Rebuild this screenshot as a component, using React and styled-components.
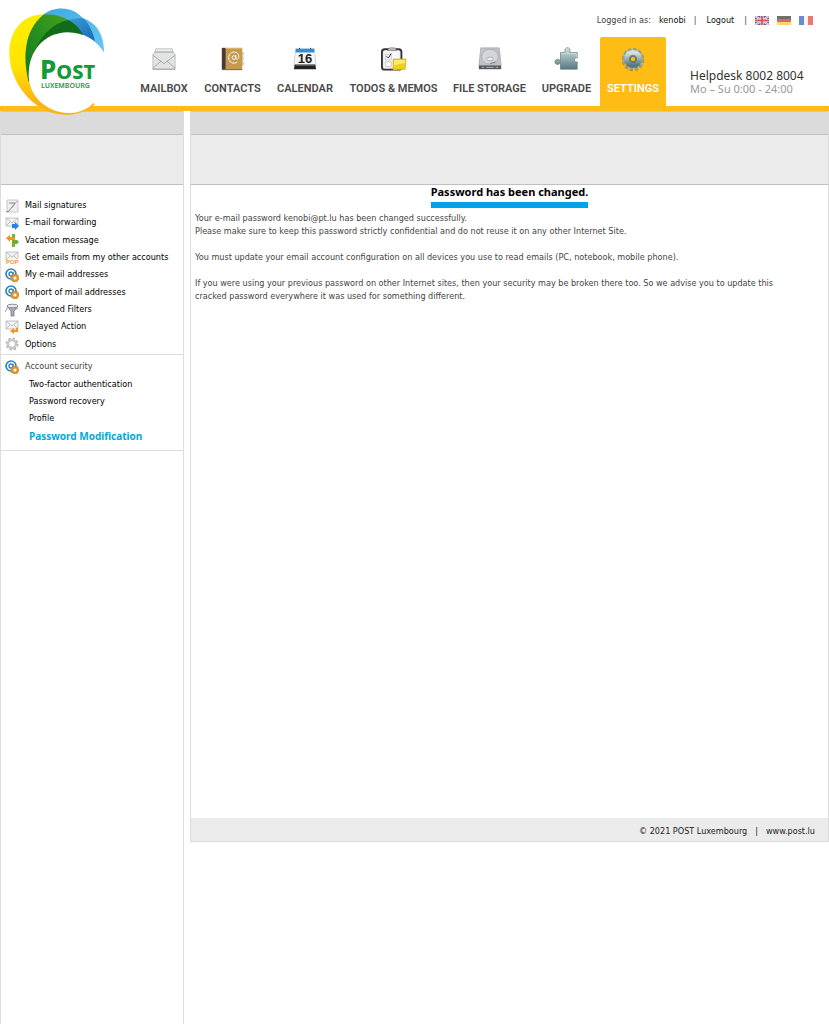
import React from "react";
import styled, { createGlobalStyle } from "styled-components";

const ui = `"DejaVu Sans Condensed", "Noto Sans", sans-serif`;
const brand = `"Noto Sans", "Open Sans", sans-serif`;

const GlobalStyle = createGlobalStyle`
  *, *::before, *::after { box-sizing: border-box; }
  body { margin: 0; background: #fff; color: #444; font: 9px/13px ${ui}; }
  a { color: inherit; text-decoration: none; }
  ul { list-style: none; margin: 0; padding: 0; }
  svg { display: block; flex: none; }
`;

const Page = styled.div`
  min-height: 100vh;
  display: flex;
  flex-direction: column;
`;

const Header = styled.header`
  position: relative;
  border-bottom: 5px solid #ffbc14;
  padding-left: 132px;
`;

const LogoLink = styled.a`
  position: absolute;
  left: 0;
  top: 0;
  z-index: 1;
`;

const AccountBar = styled.div`
  height: 37px;
  padding: 3px 16px 0 0;
  display: flex;
  align-items: center;
  justify-content: flex-end;
  white-space: nowrap;
`;

const AccountName = styled.a`
  color: #111;
  margin: 0 8px;
`;

const LogoutLink = styled.a`
  color: #111;
  margin: 0 10px;
`;

const Flags = styled.div`
  display: flex;
  gap: 8px;
  margin-left: 8px;
`;

const FlagButton = styled.button`
  border: 0;
  padding: 0;
  background: none;
  cursor: pointer;
`;

const HeaderRow = styled.div`
  display: flex;
  height: 69px;
`;

const Nav = styled.nav`
  display: flex;
`;

const NavItem = styled.a`
  width: ${(p) => p.$width}px;
  display: flex;
  flex-direction: column;
  align-items: center;
  gap: 9px;
  padding-top: 9px;
  border-radius: 2px 2px 0 0;
  white-space: nowrap;
  font: 600 11px/16px Roboto, sans-serif;
  color: ${(p) => (p.$active ? "#fff" : "#484848")};
  background: ${(p) => (p.$active ? "#ffbc14" : "transparent")};
`;

const Helpdesk = styled.div`
  margin-left: 24px;
  padding-top: 32px;
  font: 11px/13px ${brand};
  white-space: nowrap;
  color: #999;
`;

const Phone = styled.div`
  font-size: 12px;
  color: #333;
`;

const Body = styled.div`
  flex: 1;
  display: flex;
  gap: 6px;
`;

const Sidebar = styled.aside`
  width: 184px;
  flex: none;
  border: solid #dcdcdc;
  border-width: 0 1px;
`;

const TitleStrip = styled.div`
  height: 24px;
  background: #dbdbdb;
  border-top: 1px solid #c8c8c8;
  border-bottom: 1px solid #c0c0c0;
`;

const ToolStrip = styled.div`
  height: 50px;
  background: #ebebeb;
  border-bottom: 1px solid #c0c0c0;
`;

const MenuBlock = styled.div`
  padding: ${(p) => (p.$first ? 12 : 3)}px 0 ${(p) => (p.$first ? 1 : 5)}px 4px;
  border-bottom: 1px solid #dcdcdc;
`;

const MenuList = styled.ul`
  height: ${(p) => p.$height}px;
  display: grid;
  grid-auto-rows: 1fr;
`;

const MenuLink = styled.a`
  height: 100%;
  display: flex;
  align-items: center;
  gap: 6px;
  white-space: nowrap;
  color: ${(p) => (p.$muted ? "#444" : "#000")};
`;

const SubLink = styled(MenuLink)`
  padding-left: 24px;
  ${(p) => p.$active && `font: 700 10px/13px ${brand}; color: #00a9e0;`}
`;

const Main = styled.main`
  flex: 1;
  min-width: 0;
  align-self: flex-start;
  border: solid #dcdcdc;
  border-width: 0 1px 1px;
`;

const Content = styled.section`
  min-height: 633px;
  padding: 0 4px;
`;

const Heading = styled.h1`
  width: fit-content;
  margin: 0 auto 4px;
  padding-bottom: 3px;
  border-bottom: 6px solid #00a2e8;
  font: 700 11px/14px ${brand};
  color: #000;
`;

const Paragraph = styled.p`
  margin: 0 24px 13px 0;
`;

const Footer = styled.footer`
  height: 23px;
  padding: 3px 13px 0 0;
  background: #ebebeb;
  color: #222;
  display: flex;
  align-items: center;
  justify-content: flex-end;
  gap: 8px;
`;

function Logo() {
  return (
    <svg width="130" height="120" viewBox="0 0 130 120" role="img" aria-label="POST Luxembourg">
      <defs>
        <linearGradient id="lgY" x1="0" y1="0" x2="0" y2="1">
          <stop offset="0" stopColor="#ffee00" /><stop offset=".5" stopColor="#ffe600" /><stop offset=".85" stopColor="#fdb515" />
        </linearGradient>
        <linearGradient id="lgG" x1="0" y1="1" x2="1" y2="0">
          <stop offset="0" stopColor="#0f7a22" /><stop offset="1" stopColor="#45a41c" />
        </linearGradient>
        <linearGradient id="lgB" x1="0" y1="0" x2="1" y2="1">
          <stop offset="0" stopColor="#3fa9e0" /><stop offset="1" stopColor="#66c9f4" />
        </linearGradient>
        <linearGradient id="lgD" x1="0" y1="0" x2="1" y2="1">
          <stop offset="0" stopColor="#3a9cd8" /><stop offset="1" stopColor="#1b68b3" />
        </linearGradient>
      </defs>
      <g transform="scale(.33333)">
        <path d="M132 43C70 42 28 92 28 157C28 230 72 300 138 332C190 353 245 347 284 314L200 200Z" fill="url(#lgY)" />
        <path d="M130 44C155 24 195 18 230 38L252 56C290 68 314 108 312 158C296 130 262 104 225 98L160 100Z" fill="url(#lgB)" />
        <path d="M206 60C222 55 238 54 252 56C268 74 280 98 285 124C268 110 248 102 225 98Z" fill="url(#lgD)" />
        <path d="M130 44C158 41 184 47 206 60L220 100L86 246C67 170 73 90 130 44Z" fill="url(#lgG)" />
        <path d="M89 222C92 145 140 72 206 60C224 70 238 84 249 103L200 130Z" fill="#126b19" />
        <path d="M86 230C84 150 135 98 203 97C250 97 290 122 313 160C318 235 296 300 268 320C245 335 225 339 205 339C150 337 91 300 86 230Z" fill="#fff" />
      </g>
      <text x="40" y="79" fontFamily="Noto Sans" fontWeight="800" fontSize="26" fill="#159a3b">P<tspan fontSize="20">OST</tspan></text>
      <text x="41" y="88" fontFamily="Noto Sans" fontWeight="600" fontSize="7" fill="#159a3b">LUXEMBOURG</text>
    </svg>
  );
}

const NAV_ART = {
  mail: (
    <g stroke="#a5a8a8" strokeWidth=".7">
      <path d="M5 3h18v13H5z" fill="#eee" /><path d="M4 6h20v12H4z" fill="#fafafa" />
      <path d="M2 9l2-2h20l2 2v16H2z" fill="#e2e4e4" />
      <path d="M2 10l12 9 12-9M2 24l9-8M26 24l-9-8" fill="none" stroke="#888c8c" />
      <path d="M2 25h24" stroke="#888" />
    </g>
  ),
  contacts: (
    <g>
      <path d="M23 6l3 2-2 3 2 2-2 3 2 3-3 3z" fill="#ddd" stroke="#aaa" strokeWidth=".5" />
      <path d="M2 2h22v23H2z" fill="#c69a4c" /><path d="M2 2h4v23H2z" fill="#49383a" />
      <path d="M6 2h18v1H6z" fill="#dfb974" /><path d="M2 25h22v1H2z" fill="#6a5030" />
      <g fill="none" stroke="#fff" strokeWidth="1"><circle cx="15" cy="12.500" r="2" /><path d="M17 10v3.500q1.500 2 3-.5c1-4-2-6.500-5-6.500a6 6 0 1 0 3.500 11" /></g>
    </g>
  ),
  calendar: (
    <g>
      <path d="M4 3h20l2 18H2z" fill="#f7f7f7" stroke="#aaa" strokeWidth=".5" />
      <path d="M4 3h20v4H4z" fill="#2f8fd8" /><path d="M8 1v3M20 1v3" stroke="#fff" /><path d="M8 2v2M20 2v2" stroke="#333" />
      <path d="M3 20h22l1 5H2z" fill="#222" /><path d="M4 20h20v1H4z" fill="#888" />
      <text x="14" y="18" textAnchor="middle" fontFamily="Liberation Sans" fontWeight="700" fontSize="14" fill="#222">16</text>
    </g>
  ),
  todos: (
    <g>
      <rect x="1" y="3.500" width="21" height="22" rx="3" fill="#eee" stroke="#333" strokeWidth="2" />
      <path d="M4 5h15v18H4z" fill="#fafafa" /><path d="M7 5l2-3h6l2 3z" fill="#bbb" stroke="#777" strokeWidth=".6" />
      <path d="M5 9h6v6H5zM5 17h6v5H5z" fill="#fff" stroke="#aaa" strokeWidth=".7" /><path d="M6 11l2 2 3-5" fill="none" stroke="#222" />
      <path d="M13 14h14l-1 11-13 1z" fill="#ecd21c" stroke="#b89d10" strokeWidth=".6" /><path d="M14 15h12v3l-12 3z" fill="#f8ec68" />
    </g>
  ),
  storage: (
    <g>
      <path d="M4 2h20l2 19H2z" fill="#bfc2c6" stroke="#999" strokeWidth=".6" />
      <ellipse cx="14" cy="11.500" rx="9" ry="8" fill="#d3d5d8" stroke="#a0a4a8" strokeWidth=".7" />
      <ellipse cx="14" cy="14" rx="3.500" ry="2" fill="#eee" stroke="#909499" strokeWidth=".7" />
      <path d="M20 17l-6 2" stroke="#777" /><path d="M2 21h24v4H2z" fill="#54585e" /><path d="M5 23h3M10 23h8M20 23h3" stroke="#b7bac0" />
    </g>
  ),
  upgrade: (
    <g>
      <path d="M7 7h5c-2-7 7-7 5 0h8v6c-4-2-4 6 0 4v8H7v-7c-2 3-6 2-6-1s4-4 6-1z" fill="url(#steel)" stroke="#5b767a" strokeWidth=".7" />
      <path d="M8 8h16v4" fill="none" stroke="#dbe6e7" strokeWidth=".8" />
    </g>
  ),
  settings: (
    <g>
      <circle cx="14" cy="15" r="10.500" fill="none" stroke="#8b742c" strokeWidth="3" strokeDasharray="3.300 2.200" opacity=".7" />
      <circle cx="14" cy="14" r="10.500" fill="none" stroke="#8aa3aa" strokeWidth="3" strokeDasharray="3.300 2.200" />
      <circle cx="14" cy="14" r="6.500" fill="none" stroke="url(#steel)" strokeWidth="6.500" />
      <circle cx="14" cy="14" r="4" fill="none" stroke="#607b86" strokeWidth="1" />
      <circle cx="14" cy="14" r="3" fill="#ffbc14" stroke="#4b6470" />
    </g>
  ),
};

function NavIcon({ name }) {
  return (
    <svg width="26" height="26" viewBox="0 0 28 28" aria-hidden="true">
      <defs>
        <linearGradient id="steel" x1="0" y1="0" x2="0" y2="1">
          <stop offset="0" stopColor="#d4e2e4" /><stop offset="1" stopColor="#567980" />
        </linearGradient>
      </defs>
      {NAV_ART[name]}
    </svg>
  );
}

const Envelope = ({ y = 2 }) => (
  <g stroke="#b0b2b6" strokeWidth=".8" fill="#f3f3f4">
    <path d={`M1 ${y}h12v8H1z`} /><path d={`M1 ${y}l6 5 6-5M1 ${y + 8}l4-4M13 ${y + 8}l-4-4`} fill="none" />
  </g>
);

const MENU_ART = {
  signature: (
    <g><path d="M2 1h11v12H2z" fill="#f0f0f0" stroke="#bbb" strokeWidth=".8" /><path d="M4 4h6l-6 8M4 12l-3 1" fill="none" stroke="#888" /><path d="M12 2l-5 7" stroke="#aaa" /></g>
  ),
  forward: (
    <g><Envelope /><path d="M7 8h3V6l4 4-4 4v-2H7z" fill="#2583e4" /></g>
  ),
  vacation: (
    <g><path d="M7 1h3v13H7z" fill="#79b62d" /><path d="M1 5l4-3v2h5v3H5v2z" fill="#f29420" /><path d="M8 7h4l2 2-2 2H8z" fill="#72ae29" /></g>
  ),
  pop: (
    <g><Envelope y={1} /><path d="M2 8h12v6H2z" fill="#fff" /><text x="1" y="13" fontFamily="Liberation Sans" fontWeight="700" fontSize="6" fill="#f29a3c">POP</text></g>
  ),
  address: (
    <g fill="none">
      <circle cx="6" cy="6" r="5" stroke="#2180ca" strokeWidth="1.600" /><circle cx="6" cy="6" r="2" stroke="#2180ca" strokeWidth="1.300" />
      <path d="M8 4v3q2 2 3-1" stroke="#2180ca" strokeWidth="1.200" />
      <circle cx="10" cy="10" r="2.800" fill="#fff" stroke="#df952f" strokeWidth="2.400" /><circle cx="10" cy="10" r="4" stroke="#c07b24" strokeWidth="1" strokeDasharray="1.500 1.500" />
    </g>
  ),
  filter: (
    <g><path d="M2 3h11L9 8v5H6V8z" fill="#a9a9b8" stroke="#77778a" strokeWidth=".8" /><ellipse cx="7.500" cy="3" rx="5.500" ry="1.800" fill="#e7e7ee" stroke="#77778a" strokeWidth=".8" /><path d="M3 4L0 9M10 7l3-2" stroke="#999" /></g>
  ),
  delayed: (
    <g><Envelope y={1} /><path d="M13 8v4H9v2L5 11l4-3v2h2V8z" fill="#f29420" /></g>
  ),
  options: (
    <g fill="none"><circle cx="7" cy="7" r="5.500" stroke="#b5b5b5" strokeWidth="2" strokeDasharray="2.300 2" /><circle cx="7" cy="7" r="4" stroke="#c7c7c7" strokeWidth="2.400" /></g>
  ),
};

const MenuIcon = ({ name }) => (
  <svg width="14" height="14" viewBox="0 0 14 14" aria-hidden="true">{MENU_ART[name]}</svg>
);

const FLAG_ART = {
  English: (
    <g><path d="M0 0h14v9H0z" fill="#2c479c" /><path d="M0 0l14 9M14 0L0 9" stroke="#fff" strokeWidth="2" /><path d="M0 0l14 9M14 0L0 9" stroke="#d44" strokeWidth=".7" /><path d="M7 0v9M0 4.500h14" stroke="#fff" strokeWidth="3" /><path d="M7 0v9M0 4.500h14" stroke="#d8323e" strokeWidth="1.800" /></g>
  ),
  Deutsch: (
    <g><path d="M0 0h14v3H0z" fill="#555" /><path d="M0 3h14v3H0z" fill="#e04b43" /><path d="M0 6h14v3H0z" fill="#f5cf5a" /></g>
  ),
  Français: (
    <g><path d="M0 0h5v9H0z" fill="#5277c9" /><path d="M5 0h4v9H5z" fill="#f5f5f7" /><path d="M9 0h5v9H9z" fill="#ec5f57" /></g>
  ),
};

const NAV = [
  ["MAILBOX", "mail", 64],
  ["CONTACTS", "contacts", 73],
  ["CALENDAR", "calendar", 72],
  ["TODOS & MEMOS", "todos", 105],
  ["FILE STORAGE", "storage", 87],
  ["UPGRADE", "upgrade", 67],
  ["SETTINGS", "settings", 66],
];

const MENU = [
  ["Mail signatures", "signature"],
  ["E-mail forwarding", "forward"],
  ["Vacation message", "vacation"],
  ["Get emails from my other accounts", "pop"],
  ["My e-mail addresses", "address"],
  ["Import of mail addresses", "address"],
  ["Advanced Filters", "filter"],
  ["Delayed Action", "delayed"],
  ["Options", "options"],
];

const SECURITY = ["Two-factor authentication", "Password recovery", "Profile", "Password Modification"];

export default function App() {
  return (
    <Page>
      <GlobalStyle />
      <Header>
        <LogoLink href="#"><Logo /></LogoLink>
        <AccountBar>
          <span>Logged in as:</span>
          <AccountName href="#">kenobi</AccountName>
          <span>|</span>
          <LogoutLink href="#">Logout</LogoutLink>
          <span>|</span>
          <Flags>
            {Object.keys(FLAG_ART).map((lang) => (
              <FlagButton key={lang} type="button" aria-label={lang}>
                <svg width="14" height="9" viewBox="0 0 14 9">{FLAG_ART[lang]}<path d="M0 0h14v9H0z" fill="#fff" opacity=".15" /></svg>
              </FlagButton>
            ))}
          </Flags>
        </AccountBar>
        <HeaderRow>
          <Nav>
            {NAV.map(([label, icon, width]) => (
              <NavItem key={label} href="#" $width={width} $active={label === "SETTINGS"}>
                <NavIcon name={icon} />
                {label}
              </NavItem>
            ))}
          </Nav>
          <Helpdesk>
            <Phone>Helpdesk 8002 8004</Phone>
            <div>Mo – Su 0:00 - 24:00</div>
          </Helpdesk>
        </HeaderRow>
      </Header>
      <Body>
        <Sidebar>
          <TitleStrip />
          <ToolStrip />
          <MenuBlock $first>
            <MenuList $height={156}>
              {MENU.map(([label, icon]) => (
                <li key={label}><MenuLink href="#"><MenuIcon name={icon} />{label}</MenuLink></li>
              ))}
            </MenuList>
          </MenuBlock>
          <MenuBlock>
            <MenuList $height={87}>
              <li><MenuLink href="#" $muted><MenuIcon name="address" />Account security</MenuLink></li>
              {SECURITY.map((label) => (
                <li key={label}><SubLink href="#" $active={label === "Password Modification"}>{label}</SubLink></li>
              ))}
            </MenuList>
          </MenuBlock>
        </Sidebar>
        <Main>
          <TitleStrip />
          <ToolStrip />
          <Content>
            <Heading>Password has been changed.</Heading>
            <Paragraph>
              Your e-mail password kenobi@pt.lu has been changed successfully.<br />
              Please make sure to keep this password strictly confidential and do not reuse it on any other Internet Site.
            </Paragraph>
            <Paragraph>
              You must update your email account configuration on all devices you use to read emails (PC, notebook, mobile phone).
            </Paragraph>
            <Paragraph>
              If you were using your previous password on other Internet sites, then your security may be broken there too. So we advise you to update this cracked password everywhere it was used for something different.
            </Paragraph>
          </Content>
          <Footer>
            <span>© 2021 POST Luxembourg</span>
            <span>|</span>
            <a href="#">www.post.lu</a>
          </Footer>
        </Main>
      </Body>
    </Page>
  );
}
